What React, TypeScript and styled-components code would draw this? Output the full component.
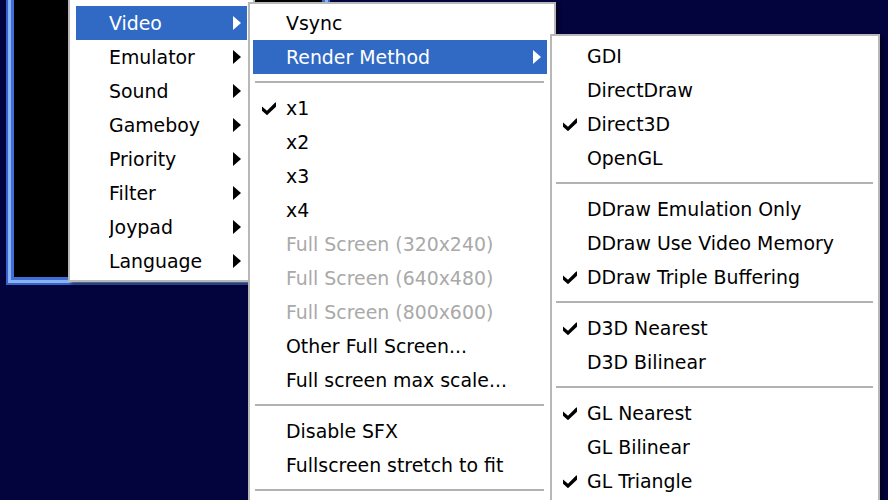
import styled, { createGlobalStyle } from "styled-components";

type Entry =
  | {
      kind: "item";
      label: string;
      checked?: boolean;
      disabled?: boolean;
      submenu?: boolean;
      active?: boolean;
    }
  | { kind: "sep" };

const item = (label: string, opts: Partial<Omit<Extract<Entry, { kind: "item" }>, "kind" | "label">> = {}): Entry => ({
  kind: "item",
  label,
  ...opts,
});
const sep: Entry = { kind: "sep" };

const mainMenu: Entry[] = [
  item("Video", { submenu: true, active: true }),
  item("Emulator", { submenu: true }),
  item("Sound", { submenu: true }),
  item("Gameboy", { submenu: true }),
  item("Priority", { submenu: true }),
  item("Filter", { submenu: true }),
  item("Joypad", { submenu: true }),
  item("Language", { submenu: true }),
];

const videoMenu: Entry[] = [
  item("Vsync"),
  item("Render Method", { submenu: true, active: true }),
  sep,
  item("x1", { checked: true }),
  item("x2"),
  item("x3"),
  item("x4"),
  item("Full Screen (320x240)", { disabled: true }),
  item("Full Screen (640x480)", { disabled: true }),
  item("Full Screen (800x600)", { disabled: true }),
  item("Other Full Screen..."),
  item("Full screen max scale..."),
  sep,
  item("Disable SFX"),
  item("Fullscreen stretch to fit"),
  sep,
];

const renderMenu: Entry[] = [
  item("GDI"),
  item("DirectDraw"),
  item("Direct3D", { checked: true }),
  item("OpenGL"),
  sep,
  item("DDraw Emulation Only"),
  item("DDraw Use Video Memory"),
  item("DDraw Triple Buffering", { checked: true }),
  sep,
  item("D3D Nearest", { checked: true }),
  item("D3D Bilinear"),
  sep,
  item("GL Nearest", { checked: true }),
  item("GL Bilinear"),
  item("GL Triangle", { checked: true }),
];

// classic 7x7 windows menu check, drawn at 2x
const CheckIcon = () => (
  <svg width="14" height="13" viewBox="0 0 7 6.5">
    <polygon points="0,2.2 2.5,4.4 6.6,0.2 7,0.2 7,2.4 2.5,6.6 0,4.4" fill="#000" />
  </svg>
);

const ArrowIcon = ({ color }: { color: string }) => (
  <svg width="8" height="14" viewBox="0 0 8 14">
    <polygon points="0,0 8,7 0,14" fill={color} />
  </svg>
);

const MenuList = (props: { entries: Entry[] }) => (
  <>
    {props.entries.map((e, i) =>
      e.kind === "sep" ? (
        <Separator key={i}>
          <Line />
        </Separator>
      ) : (
        <Row key={i} $active={!!e.active} $disabled={!!e.disabled}>
          <CheckCell>{e.checked && <CheckIcon />}</CheckCell>
          <Label>{e.label}</Label>
          <ArrowCell>{e.submenu && <ArrowIcon color={e.active ? "#fff" : "#000"} />}</ArrowCell>
        </Row>
      )
    )}
  </>
);

const App = () => (
  <>
    <GlobalStyle />
    <Desktop>
      <GameWindow />
      <Menu $x={68} $y={-2} $w={187} $pad="6px 6px 2px 6px">
        <MenuList entries={mainMenu} />
      </Menu>
      <Menu $x={248} $y={2} $w={308} $pad="2px 7px 8px 3px">
        <MenuList entries={videoMenu} />
      </Menu>
      <Menu $x={550} $y={34} $w={330} $pad="3px 2px 8px 2px">
        <MenuList entries={renderMenu} />
      </Menu>
    </Desktop>
  </>
);

const GlobalStyle = createGlobalStyle`
  html, body {
    margin: 0;
    padding: 0;
    background: #03033e;
    overflow: hidden;
  }
`;

const Desktop = styled.div`
  position: relative;
  width: 888px;
  height: 500px;
  overflow: hidden;
  background: #03033e;
  font-family: "DejaVu Sans", Verdana, sans-serif;
`;

const GameWindow = styled.div`
  position: absolute;
  left: 8px;
  top: -30px;
  width: 320px;
  height: 313px;
  box-sizing: border-box;
  background: #000;
  border: 3px solid #88b2f2;
  box-shadow: 0 0 0 2px #3862c8, inset 0 0 0 3px #3f6ed6;
`;

const Menu = styled.div<{ $x: number; $y: number; $w: number; $pad: string }>`
  position: absolute;
  left: ${(p) => p.$x}px;
  top: ${(p) => p.$y}px;
  width: ${(p) => p.$w}px;
  box-sizing: border-box;
  display: flex;
  flex-direction: column;
  padding: ${(p) => p.$pad};
  background: #fff;
  border: 2px solid #b8b8b8;
  box-shadow: 3px 3px 3px rgba(0, 0, 0, 0.45);
`;

const Row = styled.div<{ $active: boolean; $disabled: boolean }>`
  display: grid;
  grid-template-columns: 33px 1fr auto;
  align-items: center;
  height: 34px;
  font-size: 18.9px;
  line-height: 34px;
  white-space: nowrap;
  background: ${(p) => (p.$active ? "#316ac5" : "transparent")};
  color: ${(p) => (p.$active ? "#fff" : p.$disabled ? "#a9a9a9" : "#000")};
`;

const CheckCell = styled.span`
  display: flex;
  align-items: center;
  padding-left: 9px;
`;

const Label = styled.span`
  overflow: hidden;
`;

const ArrowCell = styled.span`
  display: flex;
  align-items: center;
  padding: 0 6px 0 12px;
`;

const Separator = styled.div`
  height: 17px;
  padding: 7px 3px 0 2px;
  box-sizing: border-box;
`;

const Line = styled.div`
  height: 2px;
  background: #b2b2b2;
`;

export default App;
